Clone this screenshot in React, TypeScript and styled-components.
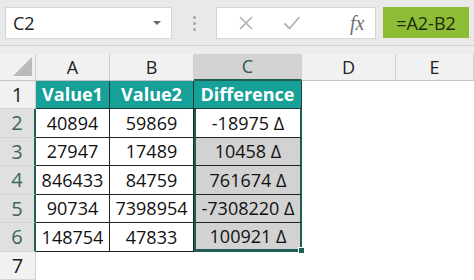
import { Fragment } from "react";
import styled, { createGlobalStyle } from "styled-components";

const GlobalStyle = createGlobalStyle`
  html, body {
    margin: 0;
    padding: 0;
    background: #ffffff;
  }
  body {
    width: 474px;
    height: 280px;
    overflow: hidden;
    font-family: "Open Sans", "Liberation Sans", sans-serif;
  }
`;

const SEL_GREEN = "#1f5e52";
const TEAL = "#17a097";

const Sheet = styled.div`
  width: 474px;
  height: 280px;
  display: flex;
  flex-direction: column;
  background: #ffffff;
`;

const FormulaBar = styled.div`
  height: 46px;
  display: flex;
  align-items: flex-start;
  padding: 7px 5px 0 5px;
  box-sizing: border-box;
  background: #e9e9e9;
  border-bottom: 1px solid #d4d4d4;
`;

const Band = styled.div`
  height: 8px;
  background: #ececec;
`;

const NameBox = styled.div`
  width: 167px;
  height: 32px;
  box-sizing: border-box;
  background: #ffffff;
  border: 1px solid #d6d6d6;
  display: flex;
  align-items: center;
  justify-content: space-between;
  padding: 0 10px 0 7px;
  font-size: 18px;
  color: #222;
`;

const DropArrow = styled.span`
  width: 0;
  height: 0;
  border-left: 4px solid transparent;
  border-right: 4px solid transparent;
  border-top: 4px solid #666;
`;

const Dots = styled.div`
  width: 44px;
  height: 32px;
  display: flex;
  flex-direction: column;
  align-items: center;
  justify-content: center;
  gap: 3px;
`;

const Dot = styled.span`
  width: 3px;
  height: 3px;
  border-radius: 50%;
  background: #a6a6a6;
`;

const ButtonBox = styled.div`
  width: 160px;
  height: 32px;
  box-sizing: border-box;
  background: #ffffff;
  border: 1px solid #d6d6d6;
  display: flex;
  align-items: center;
  padding-left: 21px;
  gap: 29px;
`;

const Fx = styled.span`
  font-family: "Liberation Serif", "DejaVu Serif", serif;
  font-style: italic;
  font-size: 20px;
  color: #707070;
  margin-left: 20px;
`;

const FormulaBox = styled.div`
  margin-left: 7px;
  width: 86px;
  height: 31px;
  background: #8dbd35;
  display: flex;
  align-items: center;
  justify-content: center;
  font-size: 18px;
  color: #1f2a10;
`;

const Grid = styled.div`
  flex: 1;
  display: grid;
  grid-template-columns: 36px 74px 84px 108px 94px 78px;
  grid-template-rows: 27px repeat(7, 28.5px);
`;

const Corner = styled.div`
  background: #f1f1f1;
  border-right: 1px solid #d0d0d0;
  border-bottom: 1px solid #c4c4c4;
  display: flex;
  align-items: flex-end;
  justify-content: flex-end;
  padding: 0 3px 4px 0;
  box-sizing: border-box;
`;

const Triangle = styled.span`
  width: 0;
  height: 0;
  border-left: 19px solid transparent;
  border-bottom: 19px solid #b9b9b9;
`;

const ColHead = styled.div<{ $sel?: boolean }>`
  background: ${(p) => (p.$sel ? "#d3d3d3" : "#f1f1f1")};
  color: ${(p) => (p.$sel ? "#2d5a4f" : "#222")};
  border-right: 1px solid #d0d0d0;
  border-bottom: ${(p) => (p.$sel ? `2px solid ${SEL_GREEN}` : "1px solid #c4c4c4")};
  display: flex;
  align-items: center;
  justify-content: center;
  font-size: 18px;
  box-sizing: border-box;
`;

const RowHead = styled.div<{ $sel?: boolean }>`
  background: ${(p) => (p.$sel ? "#e0e0e0" : "#f1f1f1")};
  color: ${(p) => (p.$sel ? "#3a6656" : "#222")};
  border-right: ${(p) => (p.$sel ? `2px solid ${SEL_GREEN}` : "1px solid #d0d0d0")};
  border-bottom: 1px solid #d6d6d6;
  display: flex;
  align-items: center;
  justify-content: center;
  font-size: 20px;
  box-sizing: border-box;
`;

const HeadCell = styled.div`
  background: ${TEAL};
  color: #ffffff;
  font-weight: 700;
  font-size: 18px;
  display: flex;
  align-items: center;
  justify-content: center;
  border-right: 1px solid #1b3b36;
  border-bottom: 1px solid #1b3b36;
  box-sizing: border-box;
`;

type Edge = { $grey?: boolean; $sel?: boolean; $last?: boolean };

const Cell = styled.div<Edge>`
  position: relative;
  background: ${(p) => (p.$grey ? "#d2d2d2" : "#ffffff")};
  color: #111;
  font-size: 18px;
  display: flex;
  align-items: center;
  justify-content: center;
  white-space: nowrap;
  box-sizing: border-box;
  border-right: ${(p) => (p.$sel ? `2px solid ${SEL_GREEN}` : "1px solid #222")};
  border-left: ${(p) => (p.$sel ? `2px solid ${SEL_GREEN}` : "none")};
  border-bottom: ${(p) =>
    p.$sel && p.$last ? `3px solid ${SEL_GREEN}` : "1px solid #222"};
`;

const Empty = styled.div`
  background: #ffffff;
`;

const FillHandle = styled.span`
  position: absolute;
  right: -5px;
  bottom: -5px;
  width: 5px;
  height: 5px;
  background: ${SEL_GREEN};
  border: 1px solid #ffffff;
`;

const rows = [
  ["40894", "59869", "-18975"],
  ["27947", "17489", "10458"],
  ["846433", "84759", "761674"],
  ["90734", "7398954", "-7308220"],
  ["148754", "47833", "100921"],
];

function CloseIcon() {
  return (
    <svg width="16" height="16" viewBox="0 0 16 16">
      <path d="M2 2 L14 14 M14 2 L2 14" stroke="#b0b0b0" strokeWidth="1.6" fill="none" />
    </svg>
  );
}

function CheckIcon() {
  return (
    <svg width="18" height="16" viewBox="0 0 18 16">
      <path d="M1.5 8.5 L6.5 13.5 L16.5 2" stroke="#b0b0b0" strokeWidth="1.8" fill="none" />
    </svg>
  );
}

export default function App() {
  return (
    <Sheet>
      <GlobalStyle />
      <FormulaBar>
        <NameBox>
          C2
          <DropArrow />
        </NameBox>
        <Dots>
          <Dot />
          <Dot />
          <Dot />
        </Dots>
        <ButtonBox>
          <CloseIcon />
          <CheckIcon />
          <Fx>fx</Fx>
        </ButtonBox>
        <FormulaBox>=A2-B2</FormulaBox>
      </FormulaBar>
      <Band />
      <Grid>
        <Corner>
          <Triangle />
        </Corner>
        <ColHead>A</ColHead>
        <ColHead>B</ColHead>
        <ColHead $sel>C</ColHead>
        <ColHead>D</ColHead>
        <ColHead>E</ColHead>

        <RowHead>1</RowHead>
        <HeadCell>Value1</HeadCell>
        <HeadCell>Value2</HeadCell>
        <HeadCell>Difference</HeadCell>
        <Empty />
        <Empty />

        {rows.map((r, i) => {
          const last = i === rows.length - 1;
          return (
            <Fragment key={i}>
              <RowHead $sel>{i + 2}</RowHead>
              <Cell>{r[0]}</Cell>
              <Cell>{r[1]}</Cell>
              <Cell $sel $grey={i > 0} $last={last}>
                {r[2]} Δ
                {last && <FillHandle />}
              </Cell>
              <Empty />
              <Empty />
            </Fragment>
          );
        })}

        <RowHead>7</RowHead>
        <Empty />
        <Empty />
        <Empty />
        <Empty />
        <Empty />
      </Grid>
    </Sheet>
  );
}
